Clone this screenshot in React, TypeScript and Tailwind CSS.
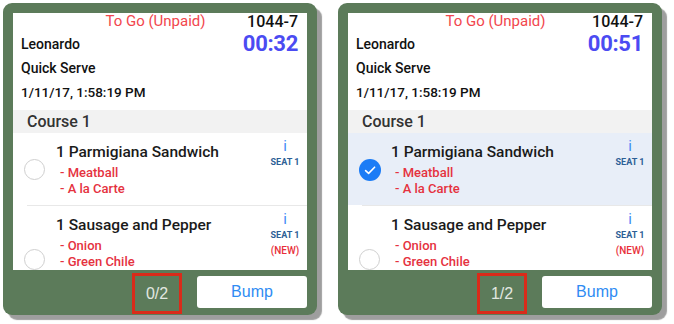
// Kitchen display tickets - two order cards side by side

type Item = {
  title: string
  mods: string[]
  isNew?: boolean
  checked?: boolean
  circleTop: string
}

type Ticket = {
  width: string
  elapsed: string
  bumped: string
  items: Item[]
}

const tickets: Ticket[] = [
  {
    width: "w-[314px]",
    elapsed: "00:32",
    bumped: "0/2",
    items: [
      { title: "1 Parmigiana Sandwich", mods: ["Meatball", "A la Carte"], circleTop: "mt-[26px]" },
      { title: "1 Sausage and Pepper", mods: ["Onion", "Green Chile"], isNew: true, circleTop: "mt-[43px]" },
    ],
  },
  {
    width: "w-[324px]",
    elapsed: "00:51",
    bumped: "1/2",
    items: [
      { title: "1 Parmigiana Sandwich", mods: ["Meatball", "A la Carte"], checked: true, circleTop: "mt-[26px]" },
      { title: "1 Sausage and Pepper", mods: ["Onion", "Green Chile"], isNew: true, circleTop: "mt-[43px]" },
    ],
  },
]

// ── Pieces ────────────────────────────────────────────────────────────────────

function CheckCircle({ checked }: { checked?: boolean }) {
  if (!checked) {
    return <div className="w-[21px] h-[21px] rounded-full border border-[#cfcfcf] bg-white" />
  }
  return (
    <div className="w-[22px] h-[22px] rounded-full bg-[#1b7cf6] flex items-center justify-center">
      <svg width="22" height="22" viewBox="0 0 22 22" fill="none">
        <path d="M6.6 11.6 L9.6 14.4 L15.6 8.2" stroke="white" strokeWidth="1.6" strokeLinecap="round" strokeLinejoin="round" />
      </svg>
    </div>
  )
}

function ItemRow({ item }: { item: Item }) {
  return (
    <div className={`flex shrink-0 ${item.checked ? "bg-[#e8eef8]" : "bg-white"} ${item.isNew ? "h-[110px]" : "h-[72px]"}`}>
      <div className="w-[43px] shrink-0 pl-[11px]">
        <div className={item.circleTop}>
          <CheckCircle checked={item.checked} />
        </div>
      </div>
      <div className="flex-1 pt-[9px]">
        <div className="text-[15.5px] leading-[20px] font-medium text-[#1a1a1a] whitespace-nowrap">{item.title}</div>
        <div className="mt-[3px] pl-[4px] text-[13px] leading-[16px] font-medium text-[#e5323f]">
          {item.mods.map((m) => (
            <div key={m}>- {m}</div>
          ))}
        </div>
      </div>
      <div className="w-[30px] mr-[7px] shrink-0 flex flex-col items-center pt-[5px]">
        <div className="text-[15px] leading-[17px] text-[#3f8ef6]">i</div>
        <div className="text-[9px] leading-[14px] font-bold text-[#2d5f96] whitespace-nowrap">SEAT 1</div>
        {item.isNew && (
          <div className="mt-[1px] text-[10px] leading-[16px] font-medium text-[#e8303a]">(NEW)</div>
        )}
      </div>
    </div>
  )
}

function TicketCard({ ticket }: { ticket: Ticket }) {
  return (
    <div
      className={`${ticket.width} h-[312px] shrink-0 rounded-[9px] bg-[#5c7b5a] px-[10px] pt-[10px] flex flex-col shadow-[5px_5px_1px_rgba(0,0,0,0.38)]`}
    >
      <div className="h-[257px] bg-white overflow-hidden flex flex-col">
        <div className="flex h-[17px] leading-[17px] pr-[9px]">
          <div className="flex-1" />
          <div className="text-[15px] text-[#f2464d] whitespace-nowrap">To Go (Unpaid)</div>
          <div className="flex-1 text-right text-[16px] font-medium text-[#111]">1044-7</div>
        </div>
        <div className="flex items-center justify-between h-[28px] pl-[8px] pr-[9px]">
          <div className="text-[14px] font-medium text-[#111]">Leonardo</div>
          <div className="text-[22px] leading-[28px] font-bold tracking-[-0.3px] text-[#4b4bf2]">{ticket.elapsed}</div>
        </div>
        <div className="h-[20px] leading-[20px] pl-[8px] text-[14px] font-medium text-[#111]">Quick Serve</div>
        <div className="mt-[4px] h-[21px] leading-[21px] pl-[8px] text-[13.5px] font-medium text-[#111]">
          1/11/17, 1:58:19 PM
        </div>
        <div className="mt-[7px] h-[23px] leading-[23px] shrink-0 bg-[#f2f2f2] pl-[14px] text-[16px] font-medium text-[#333]">
          Course 1
        </div>
        <ItemRow item={ticket.items[0]} />
        <div className="ml-[14px] h-px shrink-0 bg-[#e8e8e8]" />
        <ItemRow item={ticket.items[1]} />
      </div>

      <div className="flex-1 flex items-start justify-end gap-[15px] font-['Liberation_Sans',sans-serif]">
        <div className="mt-[3px] w-[50px] h-[41px] border-[3px] border-[#d92b1a] flex items-center justify-center text-[16px] text-[#e2e8e1]">
          {ticket.bumped}
        </div>
        <div className="mt-[6px] w-[110px] h-[32px] rounded-[3px] bg-white flex items-center justify-center text-[16px] text-[#2f8cf3]">
          Bump
        </div>
      </div>
    </div>
  )
}

// ── App ───────────────────────────────────────────────────────────────────────

export default function App() {
  return (
    <div className="w-[674px] h-[324px] bg-white flex items-start gap-[21px] pt-[3px] pl-[3px] font-['Roboto',sans-serif]">
      {tickets.map((t) => (
        <TicketCard key={t.elapsed} ticket={t} />
      ))}
    </div>
  )
}
